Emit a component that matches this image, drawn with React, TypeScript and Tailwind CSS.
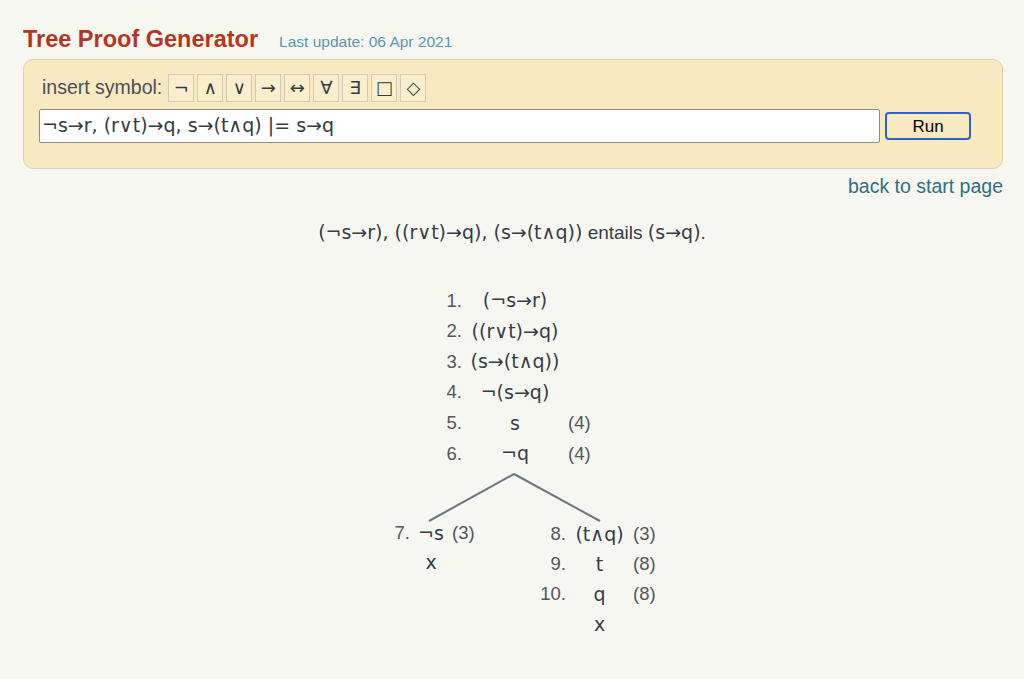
import React from 'react'

const SYMBOLS = ['¬', '∧', '∨', '→', '↔', '∀', '∃', '□', '◇']

const sans = "font-['Liberation_Sans',Arial,sans-serif]"
const formula = "font-['DejaVu_Sans',sans-serif]"

interface Row {
  n: string
  f: string
  j?: string
}

const TRUNK: Row[] = [
  { n: '1.', f: '(¬s→r)' },
  { n: '2.', f: '((r∨t)→q)' },
  { n: '3.', f: '(s→(t∧q))' },
  { n: '4.', f: '¬(s→q)' },
  { n: '5.', f: 's', j: '(4)' },
  { n: '6.', f: '¬q', j: '(4)' },
]

const LEFT: Row[] = [
  { n: '7.', f: '¬s', j: '(3)' },
  { n: '', f: 'x' },
]

const RIGHT: Row[] = [
  { n: '8.', f: '(t∧q)', j: '(3)' },
  { n: '9.', f: 't', j: '(8)' },
  { n: '10.', f: 'q', j: '(8)' },
  { n: '', f: 'x' },
]

function TreeRows({ rows, cols, h }: { rows: Row[]; cols: string; h: string }) {
  return (
    <div className="flex flex-col">
      {rows.map((r, i) => (
        <div key={i} className={`grid items-center ${h} ${cols}`}>
          <span className={`${sans} text-right text-[18.5px] text-[#4f565d]`}>{r.n}</span>
          <span className={`${formula} text-center text-[19px] text-[#353c45]`}>{r.f}</span>
          <span className={`${sans} text-[18.5px] text-[#4f565d]`}>{r.j}</span>
        </div>
      ))}
    </div>
  )
}

export default function App() {
  return (
    <div className={`min-h-screen w-full bg-[#f7f7f2] ${sans}`}>
      <div className="pl-[23px] pr-[21px] pt-[25px]">
        {/* Header */}
        <div className="flex items-baseline">
          <h1 className="text-[23.5px] font-bold leading-[28px] text-[#b5361f]">Tree Proof Generator</h1>
          <span className="ml-[21px] text-[15.5px] text-[#5797b0]">Last update: 06 Apr 2021</span>
        </div>

        {/* Input panel */}
        <div className="mt-[6px] h-[110px] rounded-[10px] border border-[#dbcfae] bg-[#f8e9c1] pl-[15px] pr-[30px] pt-[13px]">
          <div className="flex items-center pl-[3px]">
            <span className="text-[19.5px] text-[#46505a]">insert symbol:</span>
            <div className="ml-[6px] flex gap-[3px]">
              {SYMBOLS.map((s) => (
                <button
                  key={s}
                  className={`${formula} flex h-[28px] w-[26px] shrink-0 items-center justify-center border border-[#d4c8b4] bg-[#fbeecd] text-[18px] text-[#333a42]`}
                >
                  {s}
                </button>
              ))}
            </div>
          </div>
          <div className="mt-[6px] flex items-center">
            <div
              className={`${formula} flex h-[34px] w-[841px] shrink-0 items-center rounded-[2px] border border-[#8a8a8a] bg-white px-[2px] text-[19px] text-[#333a42]`}
            >
              ¬s→r, (r∨t)→q, s→(t∧q) |= s→q
            </div>
            <button className="ml-[5px] h-[28px] w-[86px] shrink-0 rounded-[4px] border-2 border-[#2b63cc] bg-[#f8e9c1] text-[17px] text-black">
              Run
            </button>
          </div>
        </div>

        <div className="mt-[4px] text-right text-[19.5px] leading-[26px] text-[#2f7080]">
          <a href="#">back to start page</a>
        </div>
      </div>

      {/* Result sentence */}
      <p className="mt-[20px] text-center text-[19px] leading-[26px] text-[#353c45]">
        <span className={formula}>(¬s→r), ((r∨t)→q), (s→(t∧q))</span> entails <span className={formula}>(s→q)</span>.
      </p>

      {/* Tree */}
      <div className="ml-[380px] mt-[39px] w-[300px]">
        <div className="ml-[40px]">
          <TreeRows rows={TRUNK} cols="grid-cols-[42px_106px_1fr]" h="h-[30.6px]" />
        </div>
        <svg width="300" height="50" className="overflow-visible">
          <line x1="134" y1="5" x2="49" y2="52" stroke="#6b7684" strokeWidth="2" />
          <line x1="134" y1="5" x2="220" y2="52" stroke="#6b7684" strokeWidth="2" />
        </svg>
        <div className="flex">
          <div className="w-[150px]">
            <TreeRows rows={LEFT} cols="grid-cols-[30px_42px_1fr]" h="h-[29px]" />
          </div>
          <div className="w-[150px]">
            <TreeRows rows={RIGHT} cols="grid-cols-[36px_67px_1fr]" h="h-[30px]" />
          </div>
        </div>
      </div>
    </div>
  )
}
